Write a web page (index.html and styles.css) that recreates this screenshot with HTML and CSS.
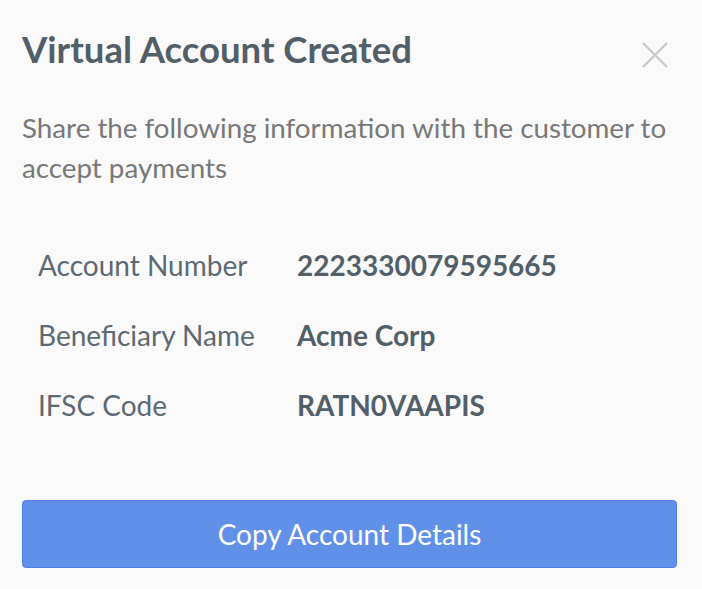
FILE: index.html
```html
<!DOCTYPE html>
<html>
<head>
<meta charset="utf-8">
<link rel="stylesheet" href="styles.css">
</head>
<body>
<div class="modal">
  <div class="header">
    <h1 class="title">Virtual Account Created</h1>
    <button class="close" aria-label="Close">
      <svg width="26" height="26" viewBox="0 0 26 26"><path d="M1 1L25 25M25 1L1 25" stroke="#c9c9c9" stroke-width="2.4" fill="none"/></svg>
    </button>
  </div>
  <p class="desc">Share the following information with the customer to accept payments</p>
  <div class="details">
    <div class="row"><span class="label">Account Number</span><span class="value">2223330079595665</span></div>
    <div class="row"><span class="label">Beneficiary Name</span><span class="value">Acme Corp</span></div>
    <div class="row"><span class="label">IFSC Code</span><span class="value">RATN0VAAPIS</span></div>
  </div>
  <button class="copy">Copy Account Details</button>
</div>
</body>
</html>
```
FILE: styles.css
```css
html, body {
  margin: 0;
  padding: 0;
  background: #fafafa;
}
body {
  font-family: Lato, "Open Sans", sans-serif;
}
.modal {
  padding: 27px 25px 0 22px;
  display: flex;
  flex-direction: column;
}
.header {
  display: flex;
  justify-content: space-between;
  align-items: flex-start;
}
.title {
  margin: 0;
  font-size: 36.5px;
  font-weight: 700;
  color: #535f68;
  line-height: 44px;
}
.close {
  border: none;
  background: none;
  padding: 0;
  margin-right: 9px;
  margin-top: 15px;
  width: 26px;
  height: 26px;
  display: flex;
}
.desc {
  margin: 37px 0 0 0;
  font-size: 27.75px;
  line-height: 40px;
  color: #787878;
}
.details {
  margin-top: 42px;
  padding-left: 16px;
  display: flex;
  flex-direction: column;
}
.row {
  display: flex;
  height: 70px;
  align-items: center;
}
.label {
  width: 259px;
  font-size: 28px;
  color: #5d6972;
}
.value {
  font-size: 28px;
  font-weight: 700;
  color: #535f68;
}
.copy {
  margin-top: 60px;
  height: 68px;
  width: 655px;
  background: #6190e8;
  border: 1px solid #4c80e2;
  border-radius: 4px;
  color: #ffffff;
  font-family: Lato, "Open Sans", sans-serif;
  font-size: 28px;
  padding: 0;
}
```
